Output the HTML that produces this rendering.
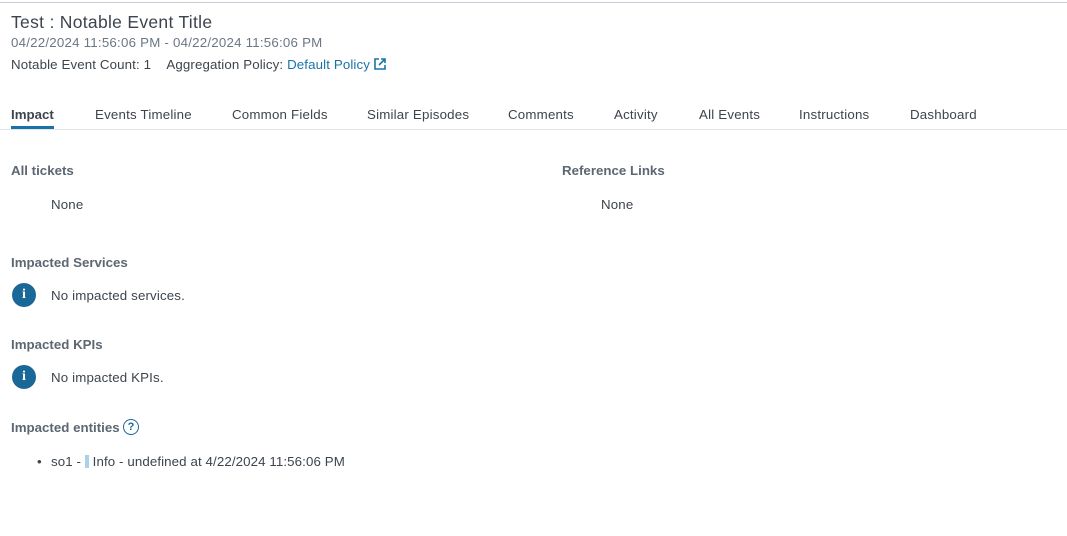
<!DOCTYPE html>
<html><head><meta charset="utf-8"><style>
body{margin:0;width:1067px;height:536px;background:#fff;font-family:"Liberation Sans",sans-serif;color:#3c444d;position:relative;overflow:hidden}
.a{position:absolute;white-space:nowrap;font-size:13.3px;letter-spacing:0.15px}
.h{font-weight:bold;color:#5c6773;letter-spacing:0}
.tab{position:absolute;top:107px;font-size:13.3px;letter-spacing:0.2px;color:#3c444d}
.ic{position:absolute;left:12px;width:24px;height:24px;border-radius:50%;background:#1a6897;color:#fff;font:bold 14px "Liberation Serif",serif;text-align:center;line-height:24px}
</style></head><body>
<div style="position:absolute;left:0;top:2px;width:1067px;height:1px;background:#c3cbd4"></div>
<div class="a" style="left:11px;top:12px;font-size:17.5px;letter-spacing:0.3px">Test : Notable Event Title</div>
<div class="a" style="left:11px;top:35px;color:#6b7785;letter-spacing:0.22px">04/22/2024 11:56:06 PM - 04/22/2024 11:56:06 PM</div>
<div class="a" style="left:11px;top:57px;letter-spacing:0.12px">Notable Event Count: 1 &nbsp;&nbsp;&nbsp;Aggregation Policy: <span style="color:#1a73a8">Default Policy</span>
<svg width="12" height="12" viewBox="0 0 12 12" style="vertical-align:-1px"><path d="M5 1H1v10h10V7M7 1h4v4M11 1L5 7" fill="none" stroke="#1a73a8" stroke-width="1.6"/></svg></div>
<div class="tab" style="left:11px;font-weight:bold;letter-spacing:0">Impact</div>
<div style="position:absolute;left:11px;top:126px;width:43px;height:3px;background:#1a73a8"></div>
<div class="tab" style="left:95px">Events Timeline</div>
<div class="tab" style="left:232px">Common Fields</div>
<div class="tab" style="left:367px">Similar Episodes</div>
<div class="tab" style="left:508px">Comments</div>
<div class="tab" style="left:614px">Activity</div>
<div class="tab" style="left:699px">All Events</div>
<div class="tab" style="left:799px">Instructions</div>
<div class="tab" style="left:910px">Dashboard</div>
<div style="position:absolute;left:0;top:129px;width:1067px;height:1px;background:#e1e6eb"></div>
<div class="a h" style="left:11px;top:163px">All tickets</div>
<div class="a h" style="left:562px;top:163px">Reference Links</div>
<div class="a" style="left:51px;top:197px">None</div>
<div class="a" style="left:601px;top:197px">None</div>
<div class="a h" style="left:11px;top:255px">Impacted Services</div>
<div class="ic" style="top:283px">i</div>
<div class="a" style="left:51px;top:288px">No impacted services.</div>
<div class="a h" style="left:11px;top:337px">Impacted KPIs</div>
<div class="ic" style="top:365px">i</div>
<div class="a" style="left:51px;top:370px">No impacted KPIs.</div>
<div class="a h" style="left:11px;top:420px">Impacted entities</div>
<div style="position:absolute;left:123px;top:419px;width:14px;height:14px;border:1.5px solid #1a6897;border-radius:50%;color:#1a6897;font:bold 11px 'Liberation Sans',sans-serif;text-align:center;line-height:14px">?</div>
<div class="a" style="left:37px;top:454px">•</div>
<div class="a" style="left:51px;top:454px;letter-spacing:0.1px">so1 - <span style="display:inline-block;width:4px;height:13px;background:#a9d1e8;vertical-align:-2px"></span> Info - undefined at 4/22/2024 11:56:06 PM</div>
</body></html>
